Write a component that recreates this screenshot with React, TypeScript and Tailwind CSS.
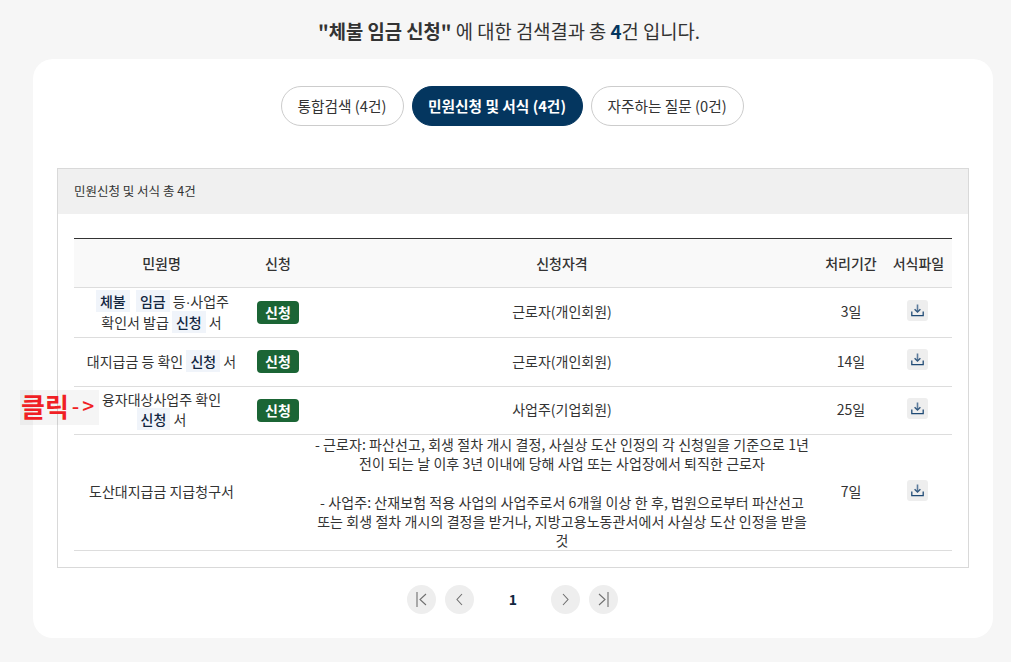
import type { ReactNode } from "react";

const rows = [
  {
    name: (
      <>
        <Mark className="ml-[2px]">체불</Mark> <Mark className="ml-[3px]">임금</Mark> 등<span className="font-['Liberation_Sans']">·</span>사업주
        <br />
        확인서 발급 <Mark>신청</Mark> 서
      </>
    ),
    target: "근로자(개인회원)",
    days: "3일",
    height: "h-[50px]",
    badge: "",
  },
  {
    name: (
      <>
        대지급금 등 확인 <Mark>신청</Mark> 서
      </>
    ),
    target: "근로자(개인회원)",
    days: "14일",
    height: "h-[49px]",
    badge: "mb-[2px]",
  },
  {
    name: (
      <>
        융자대상사업주 확인
        <br />
        <Mark>신청</Mark> 서
      </>
    ),
    target: "사업주(기업회원)",
    days: "25일",
    height: "h-[48px]",
    badge: "",
  },
];

function Mark({ children, className = "" }: { children: ReactNode; className?: string }) {
  return <span className={`bg-[#f0f4fa] px-1 py-px font-medium text-[#12263f] ${className}`}>{children}</span>;
}

function DownloadButton() {
  return (
    <span className="mx-auto mb-[5px] flex size-[21px] items-center justify-center rounded-[3px] bg-[#eeeeee]">
      <svg width="13" height="13" viewBox="0 0 13 13" fill="none" aria-hidden>
        <path d="M6.5 0.5V7.5" stroke="#5b7b9c" strokeWidth="1.6" />
        <path d="M3.6 5.2L6.5 8.1L9.4 5.2" stroke="#34597f" strokeWidth="1.4" />
        <path d="M0.8 7.5V11.6H12.2V7.5" stroke="#1f4a75" strokeWidth="1.3" />
      </svg>
    </span>
  );
}

function ApplyBadge({ className = "" }: { className?: string }) {
  return (
    <span
      className={`mx-auto flex h-[23px] w-[42px] items-center justify-center rounded-[4px] bg-[#1b6535] text-[14px] font-bold text-white ${className}`}
    >
      신청
    </span>
  );
}

function PageButton({ children }: { children: ReactNode }) {
  return (
    <span className="flex size-[29px] items-center justify-center rounded-full bg-[#eeeeee]">
      <svg width="15" height="17" viewBox="0 0 15 17" fill="none" stroke="#6f6f6f" strokeWidth="1.1" aria-hidden>
        {children}
      </svg>
    </span>
  );
}

function Tab({ children, active, width }: { children: ReactNode; active?: boolean; width: string }) {
  return (
    <span
      className={`flex h-10 items-center justify-center rounded-full border text-[14.7px] ${width} ${
        active
          ? "border-[#04365f] bg-[#04365f] font-bold text-white"
          : "border-[#cccccc] bg-white text-[#333333]"
      }`}
    >
      {children}
    </span>
  );
}

export default function App() {
  return (
    <div
      className="relative h-[662px] overflow-hidden bg-[#f6f6f6] text-[#333333]"
      style={{ fontFamily: '"Noto Sans CJK KR", "Noto Sans", sans-serif' }}
    >
      <h1 className="flex h-[59px] items-center justify-center pt-[3px] pl-[7px] text-[18.75px] font-normal text-[#333333]">
        <span>
          <b className="font-bold">"체불 임금 신청"</b> 에 대한 검색결과 총 <b className="font-bold text-[#04365f]">4</b>건 입니다.
        </span>
      </h1>

      <main className="mr-[18px] ml-[33px] h-[579px] rounded-[20px] bg-white px-6 pt-[27px]">
        <div className="flex justify-center gap-2 pr-[2px]">
          <Tab width="w-[123px]">통합검색 (4건)</Tab>
          <Tab width="w-[171px]" active>
            민원신청 및 서식 (4건)
          </Tab>
          <Tab width="w-[153px]">자주하는 질문 (0건)</Tab>
        </div>

        <section className="mt-[42px] h-[400px] border border-[#d9d9d9]">
          <div className="flex h-[45px] items-center bg-[#f0f0f0] px-4 text-[12.5px] text-[#333333]">민원신청 및 서식 총 4건</div>

          <div className="px-4 pt-6">
            <table className="w-[878px] table-fixed border-t border-[#333333] text-center text-[14px] text-[#333333]">
              <colgroup>
                <col className="w-[175px]" />
                <col className="w-[58px]" />
                <col className="w-[510px]" />
                <col className="w-[68px]" />
                <col className="w-[67px]" />
              </colgroup>
              <thead>
                <tr className="h-[49px] border-b border-[#dddddd] bg-[#f9f9f9] font-medium">
                  <th className="font-medium">민원명</th>
                  <th className="font-medium">신청</th>
                  <th className="font-medium">신청자격</th>
                  <th className="font-medium">처리기간</th>
                  <th className="font-medium">서식파일</th>
                </tr>
              </thead>
              <tbody>
                {rows.map((row) => (
                  <tr key={row.days} className={`border-b border-[#dddddd] ${row.height}`}>
                    <td className="pb-[3px] leading-[20px]">{row.name}</td>
                    <td>
                      <ApplyBadge className={row.badge} />
                    </td>
                    <td className="pb-[2px]">{row.target}</td>
                    <td className="pb-[2px]">{row.days}</td>
                    <td className="pr-[2px]">
                      <DownloadButton />
                    </td>
                  </tr>
                ))}
                <tr className="h-[116px] border-b border-[#dddddd]">
                  <td className="pb-[2px]">도산대지급금 지급청구서</td>
                  <td />
                  <td className="leading-[19.2px] tracking-[0.08px]">
                    - 근로자: 파산선고, 회생 절차 개시 결정, 사실상 도산 인정의 각 신청일을 기준으로 1년
                    <br />
                    전이 되는 날 이후 3년 이내에 당해 사업 또는 사업장에서 퇴직한 근로자
                    <br />
                    <br />
                    - 사업주: 산재보험 적용 사업의 사업주로서 6개월 이상 한 후, 법원으로부터 파산선고
                    <br />
                    또는 회생 절차 개시의 결정을 받거나, 지방고용노동관서에서 사실상 도산 인정을 받을
                    <br />것
                  </td>
                  <td className="pb-[2px]">7일</td>
                  <td className="pr-[2px]">
                    <DownloadButton />
                  </td>
                </tr>
              </tbody>
            </table>
          </div>
        </section>

        <nav className="mt-[17px] flex items-center justify-center pr-[2px]">
          <PageButton>
            <path d="M3 1V16M12 3L6 8.5L12 14" />
          </PageButton>
          <span className="ml-[9px]">
            <PageButton>
              <path d="M10 3L5 8.5L10 14" />
            </PageButton>
          </span>
          <span className="w-[77px] pl-[2px] text-center text-[14px] font-bold text-[#12263f]">1</span>
          <PageButton>
            <path d="M5 3L10 8.5L5 14" />
          </PageButton>
          <span className="ml-[9px]">
            <PageButton>
              <path d="M12 1V16M3 3L9 8.5L3 14" />
            </PageButton>
          </span>
        </nav>
      </main>

      <div className="absolute left-5 top-[390px] flex h-[35px] w-[79px] items-center whitespace-nowrap bg-[#000000]/[0.04] pb-[4px] text-[26px] leading-none font-bold text-[#f01f25]">
        <span className="ml-px">클릭</span>
        <span className="ml-[3px] text-[21px] font-medium tracking-[3px]">-&gt;</span>
      </div>
    </div>
  );
}
